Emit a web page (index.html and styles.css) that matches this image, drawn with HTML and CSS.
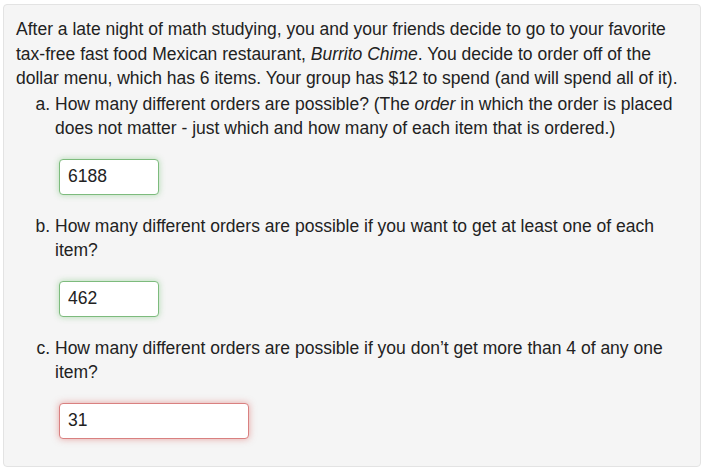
FILE: index.html
```html
<!DOCTYPE html>
<html>
<head>
<meta charset="utf-8">
<link rel="stylesheet" href="styles.css">
</head>
<body>
<div class="well">
  <p class="intro">After a late night of math studying, you and your friends decide to go to your favorite tax-free fast food Mexican restaurant, <em>Burrito Chime</em>. You decide to order off of the dollar menu, which has 6 items. Your group has $12 to spend (and will spend all of it).</p>
  <ol class="parts">
    <li>
      <div class="q">How many different orders are possible? (The <em>order</em> in which the order is placed does not matter - just which and how many of each item that is ordered.)</div>
      <div class="answer"><input class="field ok short" type="text" value="6188"></div>
    </li>
    <li>
      <div class="q">How many different orders are possible if you want to get at least one of each item?</div>
      <div class="answer"><input class="field ok short" type="text" value="462"></div>
    </li>
    <li>
      <div class="q">How many different orders are possible if you don’t get more than 4 of any one item?</div>
      <div class="answer"><input class="field bad long" type="text" value="31"></div>
    </li>
  </ol>
</div>
</body>
</html>
```

FILE: styles.css
```css
html, body {
  margin: 0;
  padding: 0;
  background: #ffffff;
}
body {
  font-family: "Liberation Sans", Arial, sans-serif;
  font-size: 17.5px;
  line-height: 24.5px;
  color: #222;
}
.well {
  margin: 4px 4px 0 3px;
  padding: 12px 12px 22px 12px;
  background: #f5f5f5;
  border: 1px solid #e3e3e3;
  border-radius: 4px;
  height: 427px;
  box-sizing: content-box;
}
.intro {
  margin: 0;
}
.parts {
  margin: 0;
  padding-left: 39px;
  list-style: lower-alpha;
}
.li-gap {
  display: none;
}
.parts li:first-child {
  margin-top: 1px;
}
.answer {
  padding: 18px 0 19px 4px;
}
.field {
  display: block;
  box-sizing: border-box;
  height: 36px;
  padding: 0 8px;
  font-family: "Liberation Sans", Arial, sans-serif;
  font-size: 17.5px;
  color: #222;
  background: #fff;
  border-radius: 4px;
  outline: none;
}
.short { width: 100px; }
.long { width: 190px; }
.ok {
  border: 1px solid #7dbb7d;
  box-shadow: 0 0 6px rgba(92, 184, 92, 0.45);
}
.bad {
  border: 1px solid #d98080;
  box-shadow: 0 0 7px rgba(217, 83, 79, 0.5);
}
```
